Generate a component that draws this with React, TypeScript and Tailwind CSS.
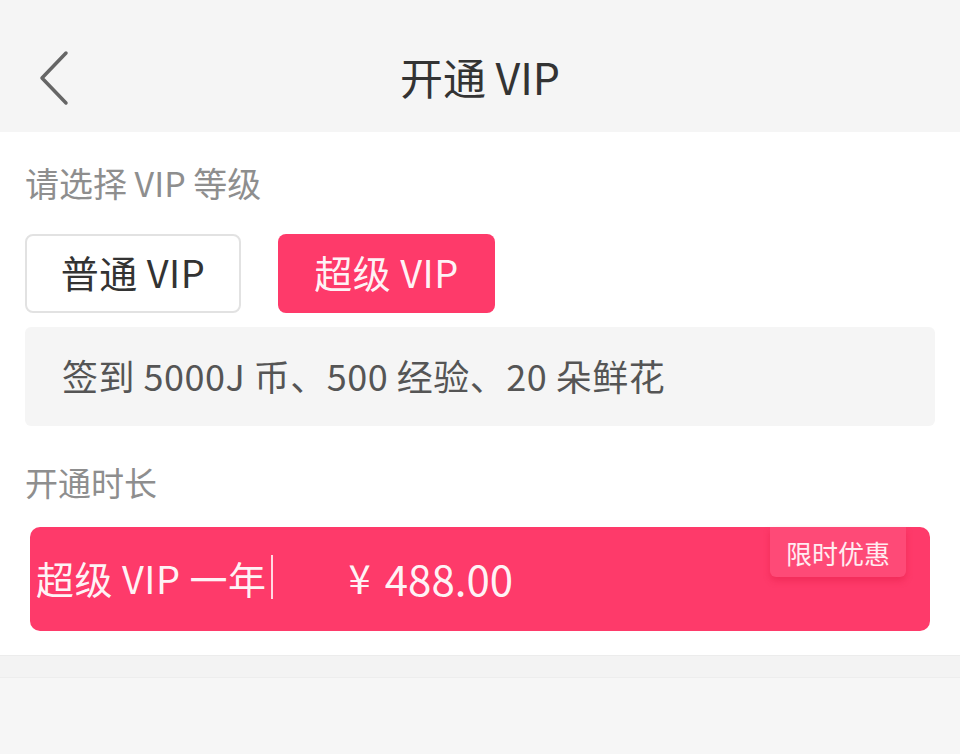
const font = { fontFamily: '"Noto Sans CJK SC", "Noto Sans", sans-serif' };

export default function App() {
  return (
    <div className="w-[960px] h-[754px] bg-[#f6f6f6] flex flex-col" style={font}>
      {/* Header */}
      <div className="relative h-[132px] bg-[#f5f5f5] flex items-center justify-center shrink-0">
        <svg
          className="absolute left-[36px] top-[50px]"
          width="36"
          height="56"
          viewBox="0 0 36 56"
          fill="none"
        >
          <path d="M30 3 L6 28 L30 53" stroke="#666" strokeWidth="3.5" strokeLinecap="round" strokeLinejoin="round" />
        </svg>
        <h1 className="text-[43px] text-[#333] leading-none pt-[20px]">开通 VIP</h1>
      </div>

      {/* Content */}
      <div className="bg-white px-[25px] pt-[34px] pb-[24px] flex flex-col shrink-0">
        <div className="text-[34px] leading-none text-[#8e8e8e]">请选择 VIP 等级</div>

        <div className="flex gap-[37px] mt-[34px]">
          <button className="w-[216px] h-[79px] pb-[4px] rounded-[8px] border-2 border-[#e2e2e2] bg-white text-[38px] tracking-[0.5px] text-[#333]">
            普通 VIP
          </button>
          <button className="w-[217px] h-[79px] pb-[4px] rounded-[8px] bg-[#fe3a6a] text-[38px] tracking-[0.5px] text-white/95">
            超级 VIP
          </button>
        </div>

        <div className="mt-[14px] h-[99px] pb-[3px] rounded-[6px] bg-[#f5f5f5] flex items-center px-[37px] text-[36px] tracking-[0.5px] text-[#555]">
          签到 5000J 币、500 经验、20 朵鲜花
        </div>

        <div className="mt-[40px] text-[33px] leading-none text-[#8e8e8e]">开通时长</div>

        <div className="relative mt-[28px] mx-[5px] h-[104px] pb-[4px] rounded-[10px] bg-[#fe3a6a] flex items-center pl-[6px] text-white">
          <span className="text-[38px] tracking-[0.5px] text-white/95">超级 VIP 一年</span>
          <span className="ml-[4px] w-[2px] h-[44px] bg-white/80" />
          <span className="ml-[76px] text-[40px] text-white/95">¥</span>
          <span className="ml-[14px] text-[42px] text-white/95">488.00</span>
          <div className="absolute right-[24px] top-0 w-[136px] h-[50px] bg-[#fe4a77] rounded-b-[6px] flex items-center justify-center text-[26px] text-white/90 shadow-[0_4px_6px_rgba(220,20,60,0.35)]">
            限时优惠
          </div>
        </div>
      </div>

      <div className="h-[22px] bg-[#f3f3f3] border-t border-[#ececec] shrink-0" />
      <div className="flex-1 bg-[#f6f6f6] border-t border-[#ededed]" />
    </div>
  );
}
